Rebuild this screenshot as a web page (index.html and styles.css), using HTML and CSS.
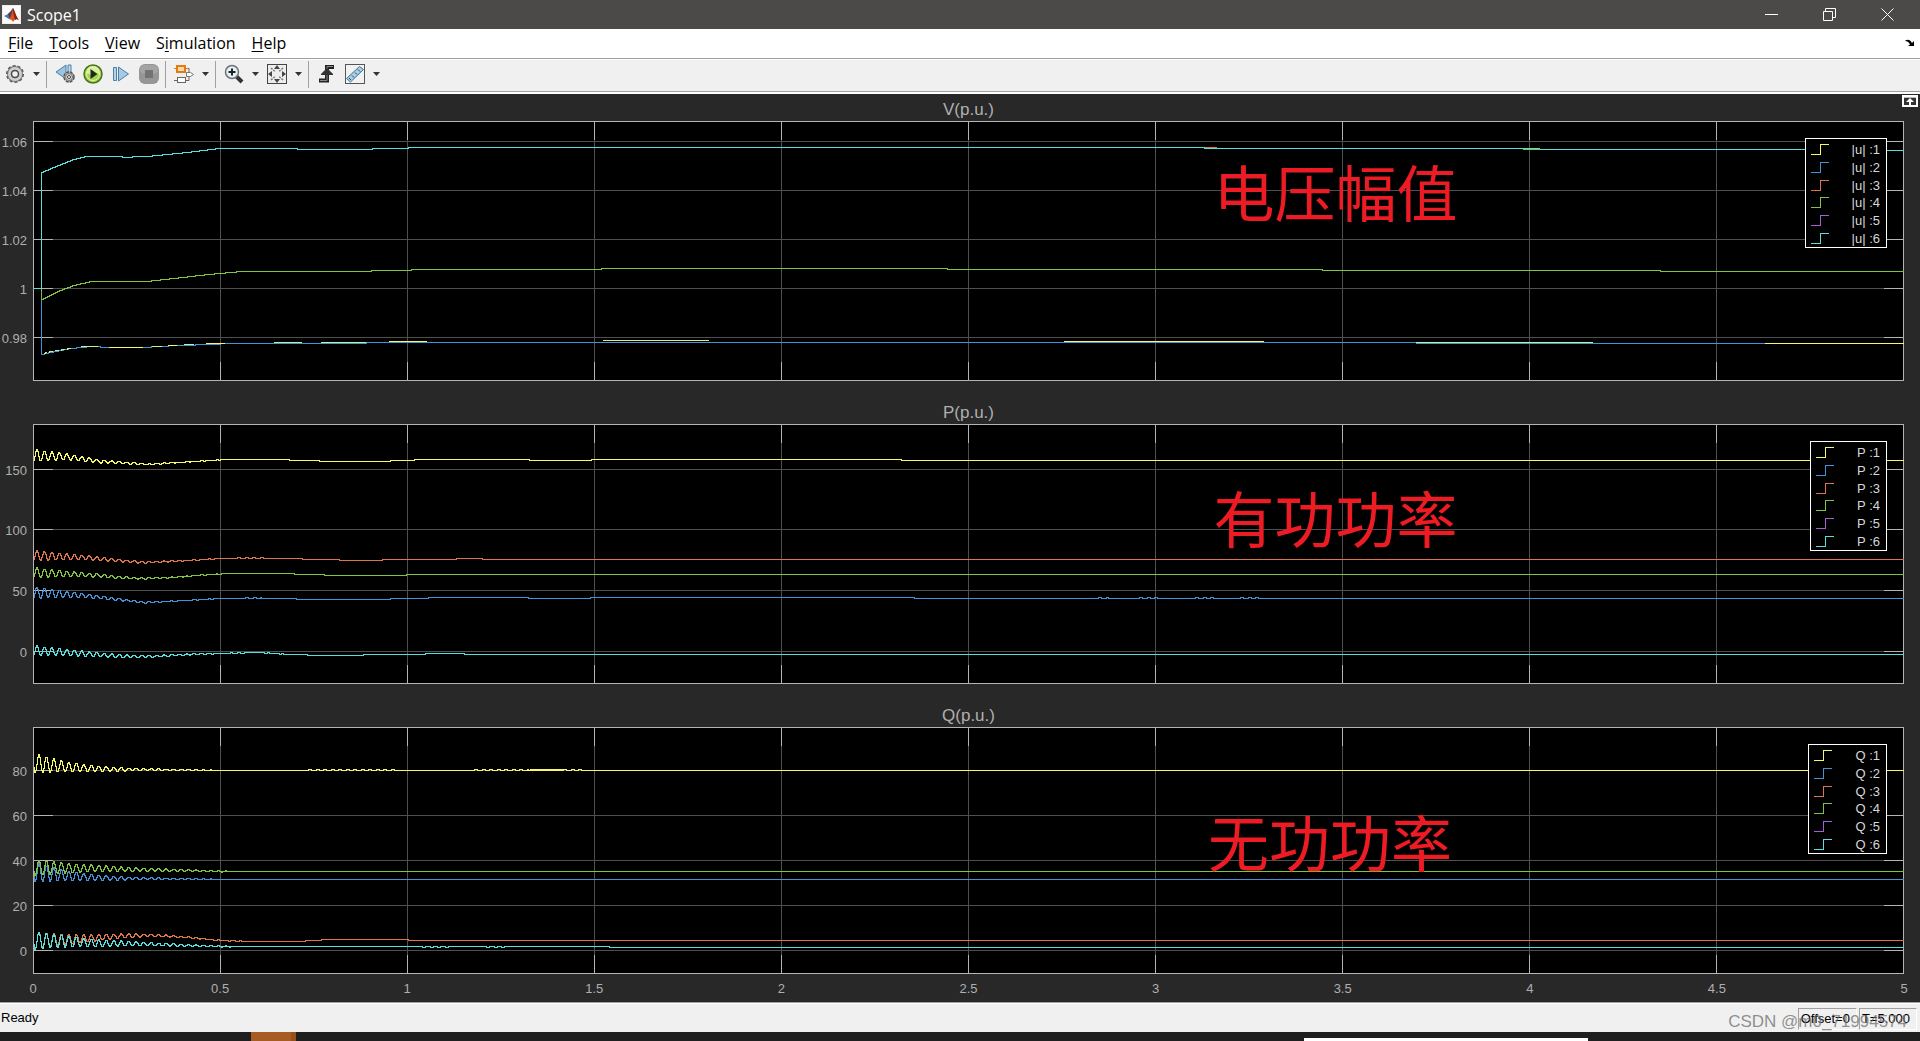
FILE: index.html
```html
<!DOCTYPE html>
<html lang="en">
  <head>
    <meta charset="utf-8">
    <title>Scope1</title>
    <link rel="stylesheet" href="styles.css">
  </head>
  <body>

    <header class="titlebar">
      <svg class="logo" width="19" height="19" viewBox="0 0 19 19">
        <rect width="19" height="19" fill="#e9eef2"/>
        <rect x="1" y="1" width="17" height="17" fill="#fafafa"/>
        <path d="M2 11l4-2 2-2 2 3-3 4z" fill="#3f7fb4"/>
        <path d="M6 9l2-2 3-4 1 5-4 7z" fill="#5b3a4c"/>
        <path d="M7 14c2-2 3-6 4-11 2 3 3 9 6 12-3-2-4-1-6 2-1-2-2-3-4-3z" fill="#d9541e"/>
        <path d="M11 3c2 3 3 9 6 12-2-1-3-1-4 0-1-3-2-7-2-12z" fill="#8c2413"/>
      </svg>
      <h1 class="apptitle">Scope1</h1>
      <button class="winbtn" aria-label="Minimize"><svg width="13" height="13" viewBox="0 0 13 13"><path d="M0 6.500H13"/></svg></button>
      <button class="winbtn" aria-label="Restore"><svg width="13" height="13" viewBox="0 0 13 13"><path d="M.5 3.500h9v9h-9zM2.500 3V.5h10v9H10"/></svg></button>
      <button class="winbtn" aria-label="Close"><svg width="13" height="13" viewBox="0 0 13 13"><path d="M.5 .5l12 12M12.500 .5l-12 12"/></svg></button>
    </header>

    <nav class="menubar">
      <button class="menu"><u>F</u>ile</button>
      <button class="menu"><u>T</u>ools</button>
      <button class="menu"><u>V</u>iew</button>
      <button class="menu">S<u>i</u>mulation</button>
      <button class="menu"><u>H</u>elp</button>
      <button class="dock" aria-label="Dock"><svg width="10" height="8" viewBox="0 0 10 8"><path d="M0 2C2 0 5 0 7 4L9 2V7H3L5 5.500C4 3 2 2 0 2z" fill="#000"/></svg></button>
    </nav>

    <div class="toolbar">
      <button class="tool" aria-label="Configuration"><svg width="20" height="20" viewBox="0 0 20 20">
        <circle cx="10" cy="10" r="8" fill="none" stroke="#555" stroke-width="2" stroke-dasharray="3 2"/>
        <circle cx="10" cy="10" r="5.500" fill="none" stroke="#777" stroke-width="5"/>
        <circle cx="10" cy="10" r="5.500" fill="none" stroke="#cfcfcf" stroke-width="3"/>
        <circle cx="10" cy="10" r="3.500" fill="#f0f0f0" stroke="#4a4a4a" stroke-width="1.500"/></svg></button>
      <button class="caret" aria-label="Configuration options"><svg width="7" height="4" viewBox="0 0 7 4"><path d="M0 0h7L3.500 4z"/></svg></button>
      <span class="sep"></span>
      <button class="tool" aria-label="Stepping options"><svg width="20" height="20" viewBox="0 0 20 20">
        <path d="M1 8l10-7v14z" fill="#9cc3e0" stroke="#4d81a8"/>
        <path d="M13 1h3v11h-3z" fill="#bdd9ec" stroke="#4d81a8"/>
        <circle cx="14" cy="13" r="5" fill="#bbb" stroke="#555" stroke-width="1.500" stroke-dasharray="3 1"/>
        <circle cx="14" cy="13" r="3.500" fill="#d5d5d5" stroke="#777"/>
        <circle cx="14" cy="13" r="1.500" fill="#fff" stroke="#444"/></svg></button>
      <button class="tool" aria-label="Run"><svg width="20" height="20" viewBox="0 0 20 20">
        <circle cx="10" cy="10" r="9" fill="#a5d34b" stroke="#47731b" stroke-width="1.500"/>
        <path d="M3 9a7 7 0 0 1 14 0c-4 2-9 2-14 0z" fill="#d8f09c"/>
        <circle cx="10" cy="10" r="6.500" fill="none" stroke="#e4f5bc"/>
        <path d="M7.500 5l7 5-7 5z" fill="#1d2b1b"/></svg></button>
      <button class="tool" aria-label="Step forward"><svg width="20" height="20" viewBox="0 0 20 20">
        <path d="M2.500 3.500h3v13h-3z" fill="#b5d3e8" stroke="#4d7fa6"/>
        <path d="M7.500 3l10 7-10 7z" fill="#a5cae3" stroke="#4d7fa6"/></svg></button>
      <button class="tool" aria-label="Stop"><svg width="20" height="20" viewBox="0 0 20 20">
        <rect width="20" height="20" rx="6" fill="#969696"/>
        <rect x="1" y="1" width="18" height="9" rx="5" fill="#a4a4a4"/>
        <rect x="6" y="6" width="8" height="8" fill="#737373"/></svg></button>
      <span class="sep"></span>
      <button class="tool" aria-label="Highlight block"><svg width="20" height="20" viewBox="0 0 20 20" fill="none">
        <path d="M0 4.500h3M11 4.500h4v4M0 16.500h3M11 16.500h4v-4" stroke="#666"/>
        <rect x="3" y="2" width="8" height="6" fill="#ffd9a5" stroke="#e07b16" stroke-width="2"/>
        <path d="M0 4.500h3M11 4.500h3" stroke="#e07b16"/>
        <rect x="3.500" y="13.500" width="8" height="5" fill="#fff" stroke="#666"/>
        <path d="M12.500 8.500h4l3 2-3 2h-4z" fill="#fff" stroke="#777"/></svg></button>
      <button class="caret" aria-label="Highlight options"><svg width="7" height="4" viewBox="0 0 7 4"><path d="M0 0h7L3.500 4z"/></svg></button>
      <span class="sep"></span>
      <button class="tool" aria-label="Zoom"><svg width="20" height="20" viewBox="0 0 20 20">
        <path d="M12 12l6 6" stroke="#333" stroke-width="4"/>
        <circle cx="8" cy="8" r="6.500" fill="#e4f0f6" stroke="#6d7478" stroke-width="1.500"/>
        <path d="M4.500 8h7M8 4.500v7" stroke="#222" stroke-width="2"/></svg></button>
      <button class="caret" aria-label="Zoom options"><svg width="7" height="4" viewBox="0 0 7 4"><path d="M0 0h7L3.500 4z"/></svg></button>
      <button class="tool" aria-label="Fit to view"><svg width="20" height="20" viewBox="0 0 20 20">
        <rect x=".5" y=".5" width="19" height="19" fill="#ededed" stroke="#444"/>
        <path d="M10 1l3 4H7zM10 19l3-4H7zM1 10l4-3v6zM19 10l-4-3v6z" fill="#444"/>
        <path d="M4 4l4 3.500M16 4l-4 3.500M4 16l4-3.500M16 16l-4-3.500" stroke="#777" stroke-width="1.500" stroke-dasharray="2 1"/></svg></button>
      <button class="caret" aria-label="Fit options"><svg width="7" height="4" viewBox="0 0 7 4"><path d="M0 0h7L3.500 4z"/></svg></button>
      <span class="sep"></span>
      <button class="tool" aria-label="Triggers"><svg width="20" height="20" viewBox="0 0 20 20">
        <path d="M2 16.500h8V3h7" fill="none" stroke="#222" stroke-width="4"/>
        <path d="M3 16.500h7V2.500h6" fill="none" stroke="#888"/>
        <path d="M4 10l6-6 6 6v1H4z" fill="#333"/></svg></button>
      <button class="tool" aria-label="Measurements"><svg width="20" height="20" viewBox="0 0 20 20">
        <rect x=".5" y=".5" width="19" height="19" fill="#f2f2f2" stroke="#555"/>
        <path d="M1.500 14.500l13-12 4 3-13 12.500z" fill="#a9cfe6" stroke="#45708c"/>
        <path d="M6 16l-2-2M9 13.500l-2-2M12 10.500l-2-2M15 7.500l-2-2" stroke="#234a66"/></svg></button>
      <button class="caret" aria-label="Measurement options"><svg width="7" height="4" viewBox="0 0 7 4"><path d="M0 0h7L3.500 4z"/></svg></button>
    </div>

    <main class="scope">
      <button class="maximize" aria-label="Maximize axes"><svg width="16" height="12" viewBox="0 0 16 12"><path d="M1 1h14v10H1z" fill="#333" stroke="#fff" stroke-width="2"/><path d="M2 2h12v1H2z" fill="#bbb"/><path d="M8 3l4 4H9v3H7V7H4z" fill="#fff"/></svg></button>

      <h2 class="title">V(p.u.)</h2>
      <section class="plot plot-v" id="v">
        <div class="note note-v" lang="zh">电压幅值</div>
      </section>

      <h2 class="title">P(p.u.)</h2>
      <section class="plot plot-p" id="p">
        <div class="note note-p" lang="zh">有功功率</div>
      </section>

      <h2 class="title">Q(p.u.)</h2>
      <section class="plot plot-q" id="q">
        <div class="note note-q" lang="zh">无功功率</div>
      </section>
    </main>

    <footer class="status">
      <span class="ready">Ready</span>
      <span class="field">Offset=0</span>
      <span class="field">T=5.000</span>
      <span class="watermark">CSDN @m0_71994574</span>
    </footer>

    <div class="taskbar">
      <span class="task"></span>
      <span class="preview"></span>
    </div>

    <script src="script.js"></script>
  </body>
</html>
```
FILE: styles.css
```css
* { box-sizing: border-box; }

body {
  margin: 0;
  height: 100vh;
  display: flex;
  flex-direction: column;
  overflow: hidden;
  background: #1f1f1f;
  font-family: "Liberation Sans", Arial, sans-serif;
  font-size: 13px;
}

button {
  margin: 0;
  padding: 0;
  border: 0;
  background: none;
  font: inherit;
  color: inherit;
}

svg { display: block; }

/* window frame */
.titlebar {
  flex: none;
  display: flex;
  align-items: center;
  height: 29px;
  padding: 0 4px 0 2px;
  background: #4b4a48;
  color: #fff;
}
.apptitle {
  flex: 1;
  margin: 0 0 0 6px;
  font: 16px/28px "Open Sans", "Noto Sans", sans-serif;
}
.winbtn {
  width: 58px;
  height: 29px;
  display: flex;
  align-items: center;
  justify-content: center;
}
.winbtn path { fill: none; stroke: #fff; }

.menubar {
  flex: none;
  display: flex;
  align-items: center;
  gap: 16px;
  height: 30px;
  padding: 0 5px 2px 8px;
  background: #fff;
  border-bottom: 1px solid #a0a0a0;
  color: #000;
  font: 16px/26px "Open Sans", "Noto Sans", sans-serif;
}
.menu u { text-underline-offset: 2px; }
.dock { margin-left: auto; }

.toolbar {
  flex: none;
  display: flex;
  align-items: center;
  height: 35px;
  padding: 0 0 3px 1px;
  background: #f0f0f0;
  border-bottom: 2px solid #fff;
  box-shadow: inset 0 1px #fff, inset 0 -1px #a0a0a0;
}
.tool {
  width: 28px;
  height: 28px;
  display: flex;
  align-items: center;
  justify-content: center;
}
.caret {
  width: 15px;
  height: 28px;
  display: flex;
  align-items: center;
  justify-content: center;
}
.caret path { fill: #333; }
.sep {
  width: 1px;
  height: 27px;
  margin: 0 4px 0 2px;
  background: #a0a0a0;
}

/* scope */
.scope {
  position: relative;
  flex: 1;
  min-height: 0;
  display: flex;
  flex-direction: column;
  padding: 0 16px 28px 33px;
  background: #282828;
  color: #afafaf;
}
.maximize {
  position: absolute;
  top: 1px;
  right: 2px;
}
.title {
  flex: none;
  margin: 0;
  padding-top: 4px;
  height: 27px;
  font-size: 17px;
  line-height: 23px;
  font-weight: normal;
  text-align: center;
}
.plot + .title { margin-top: 16px; }
.plot {
  position: relative;
  background: #000;
}
.plot-v { flex: 260 1 0; }
.plot-p { flex: 260 1 0; }
.plot-q { flex: 247 1 0; }

.graph {
  position: absolute;
  width: 100%;
  height: 100%;
  fill: none;
  shape-rendering: crispEdges;
}
.graph path { vector-effect: non-scaling-stroke; }
.grid { stroke: #4f4f4f; }
.ticks { stroke: #b4b4b4; }

.ylabel {
  position: absolute;
  right: 100%;
  margin: -6px 6px 0 0;
  line-height: 16px;
}
.xlabel {
  position: absolute;
  top: 100%;
  width: 40px;
  margin: 7px 0 0 -20px;
  line-height: 16px;
  text-align: center;
}

.note {
  position: absolute;
  z-index: 1;
  color: #ed1c24;
  font: 61px/60px "Noto Sans CJK SC", sans-serif;
  white-space: nowrap;
}
.note-v { left: 63.1%; top: 15.3%; }
.note-p { left: 63.1%; top: 24.2%; }
.note-q { left: 62.8%; top: 34%; }

.legend {
  position: absolute;
  z-index: 1;
  top: 17px;
  right: 17px;
  margin: 0;
  padding: 2px 6px 0 5px;
  height: 110px;
  display: flex;
  flex-direction: column;
  list-style: none;
  background: #000;
  border: 1px solid #fff;
  color: #d8d8d8;
}
.legend li {
  flex: 1;
  display: flex;
  align-items: center;
  justify-content: space-between;
  gap: 23px;
}
.legend svg {
  fill: none;
  shape-rendering: crispEdges;
}

.yellow { stroke: #f7f76a; }
.blue { stroke: #4593d6; }
.orange { stroke: #de7449; }
.green { stroke: #82c341; }
.purple { stroke: #a45fd6; }
.cyan { stroke: #55dfdf; }
.lime { stroke: #c4f294; }

/* bottom bars */
.status {
  position: relative;
  flex: none;
  display: flex;
  align-items: flex-end;
  gap: 2px;
  height: 30px;
  padding: 0 3px 2px 1px;
  background: #f0f0f0;
  border-top: 1px solid #a0a0a0;
  box-shadow: inset 0 1px #fff;
  color: #000;
}
.ready {
  flex: 1;
  line-height: 24px;
}
.field {
  padding: 0 6px 0 2px;
  line-height: 20px;
  border: 1px solid #fff;
  border-top-color: #a0a0a0;
  border-left-color: #a0a0a0;
}
.watermark {
  position: absolute;
  right: 13px;
  bottom: 0;
  font-size: 17px;
  line-height: 20px;
  color: rgba(110, 110, 110, 0.75);
}
.taskbar {
  flex: none;
  display: flex;
  justify-content: space-between;
  align-items: flex-end;
  height: 9px;
  padding: 0 332px 0 251px;
  background: #1f1f1f;
}
.task {
  width: 45px;
  height: 9px;
  background: #a65c22;
  border-right: 5px solid #985018;
}
.preview {
  width: 284px;
  height: 3px;
  background: #fff;
}
```
FILE: script.js
```js
const W = 1871;
const STEP = 187;
const COLORS = ['yellow', 'blue', 'orange', 'green', 'purple', 'cyan'];

// base: key points of the curve, wave: [amplitude, decay, first peak, bias]
// blips: [from, to, direction] short one-unit ripples
const plots = {
  v: {
    height: 260,
    name: '|u|',
    ticks: [[20, '1.06'], [69, '1.04'], [118, '1.02'], [167, '1'], [216, '0.98']],
    traces: [
      { color: 'blue', base: [[8, 178], [8, 233], [17, 231], [37, 227], [57, 225], [77, 226], [109, 226], [143, 224], [180, 223], [192, 222], [332, 222], [333, 221], [1382, 221], [1383, 222], [1870, 222]] },
      { color: 'lime', base: [[10, 232], [17, 230], [37, 227]], dash: '4 3' },
      { color: 'lime', base: [[47, 225], [64, 225]] },
      { color: 'yellow', base: [[75, 226], [109, 226]] },
      { color: 'lime', base: [[118, 225], [128, 225]] },
      { color: 'yellow', base: [[134, 224], [143, 224]] },
      { color: 'lime', base: [[150, 223], [160, 223]] },
      { color: 'yellow', base: [[172, 222], [191, 222]] },
      { color: 'lime', base: [[240, 221], [268, 221]] },
      { color: 'lime', base: [[287, 221], [332, 221]] },
      { color: 'yellow', base: [[355, 220], [393, 220]] },
      { color: 'lime', base: [[569, 219], [675, 219]] },
      { color: 'yellow', base: [[1030, 220], [1230, 220]] },
      { color: 'lime', base: [[1382, 221], [1559, 221]] },
      { color: 'yellow', base: [[1731, 222], [1870, 222]] },
      { color: 'green', base: [[8, 167], [8, 178], [27, 169], [40, 164], [58, 160], [113, 160], [140, 157], [175, 153], [208, 150], [337, 150], [338, 149], [377, 149], [378, 148], [567, 148], [568, 147], [913, 147], [914, 148], [1288, 148], [1289, 149], [1626, 149], [1627, 150], [1870, 150]] },
      { color: 'cyan', base: [[0, 167], [8, 167], [8, 51], [20, 46], [40, 38], [52, 35], [88, 35], [89, 36], [98, 36], [99, 35], [113, 35], [133, 33], [153, 31], [185, 27], [263, 27], [264, 28], [338, 28], [339, 27], [374, 27], [375, 26], [1170, 26], [1171, 27], [1505, 27], [1506, 28], [1810, 28], [1811, 29], [1870, 29]] },
      { color: 'orange', base: [[1171, 26], [1183, 26]] },
      { color: 'green', base: [[1489, 28], [1506, 28]] }
    ]
  },
  p: {
    height: 260,
    name: 'P',
    ticks: [[45, '150'], [105, '100'], [166, '50'], [227, '0']],
    traces: [
      { color: 'yellow', wave: [6, 52, 3, 0], base: [[0, 31], [30, 32], [67, 37], [100, 39], [114, 40], [144, 38], [177, 36], [192, 35], [255, 35], [256, 36], [285, 36], [286, 37], [356, 37], [357, 36], [380, 36], [381, 35], [495, 35], [496, 36], [557, 36], [558, 35], [867, 35], [868, 36], [1870, 36]] },
      { color: 'orange', wave: [5, 65, 3, 0], base: [[0, 131], [50, 133], [83, 136], [110, 138], [154, 136], [187, 134], [224, 134], [268, 134], [269, 135], [305, 135], [306, 136], [348, 136], [349, 135], [422, 135], [423, 134], [448, 134], [449, 135], [1870, 135]], blips: [[204, 230, -1]] },
      { color: 'green', wave: [5, 60, 3, 0], base: [[0, 148], [67, 151], [83, 153], [110, 154], [137, 153], [177, 150], [197, 149], [260, 149], [261, 150], [290, 150], [291, 151], [372, 151], [373, 150], [1870, 150]] },
      { color: 'blue', wave: [6, 52, 3, 0], base: [[0, 168], [50, 171], [94, 176], [110, 178], [134, 177], [187, 174], [262, 174], [263, 175], [356, 175], [357, 174], [394, 174], [395, 173], [494, 173], [495, 174], [556, 174], [557, 173], [880, 173], [881, 174], [1870, 174]], blips: [[212, 228, -1], [1065, 1075, -1], [1106, 1128, -1], [1162, 1180, -1], [1207, 1225, -1]] },
      { color: 'cyan', wave: [5, 75, 3, 0], base: [[0, 226], [34, 228], [73, 231], [97, 232], [117, 232], [154, 230], [187, 229], [224, 228], [257, 230], [290, 231], [329, 231], [330, 230], [391, 230], [392, 229], [430, 229], [431, 230], [1870, 230]] }
    ]
  },
  q: {
    height: 247,
    name: 'Q',
    ticks: [[43, '80'], [88, '60'], [133, '40'], [178, '20'], [223, '0']],
    traces: [
      { color: 'yellow', wave: [10, 50, 5, 1], base: [[0, 45], [67, 44], [120, 43], [1870, 43]], blips: [[275, 362, -1], [441, 495, -1], [530, 548, -1]] },
      { color: 'yellow', base: [[496, 42], [529, 42]] },
      { color: 'blue', wave: [10, 50, 5, 1], base: [[0, 154], [67, 153], [120, 152], [1870, 152]] },
      { color: 'green', wave: [8, 70, 5, 0], base: [[0, 140], [65, 141], [95, 142], [155, 143], [188, 144], [1870, 144]] },
      { color: 'orange', wave: [9, 60, 5, 0], base: [[0, 213], [35, 212], [65, 210], [95, 208], [125, 208], [155, 210], [187, 213], [217, 214], [255, 214], [287, 213], [288, 212], [374, 212], [375, 213], [1870, 213]] },
      { color: 'cyan', wave: [9, 70, 5, 0], base: [[0, 213], [35, 214], [65, 216], [95, 216], [125, 217], [155, 218], [187, 219], [217, 219], [250, 219], [575, 219], [576, 220], [1870, 220]], blips: [[389, 417, 1], [453, 474, 1]] }
    ]
  }
};

function tracePath(t) {
  const PERIOD = 7.48;
  let d = '';
  const add = (x, y) => {
    if (t.wave && x < 250) {
      const [amp, decay, peak, bias] = t.wave;
      y -= amp * Math.exp(-x / decay) * (bias + Math.cos((x - peak) * 2 * Math.PI / PERIOD));
    }
    for (const [from, to, dir] of t.blips || []) {
      if (x >= from && x < to && (x - from) % 7.5 < 3) y += dir;
    }
    const px = x + 0.5;
    const py = Math.round(y) + 0.5;
    d += d ? `H${px}V${py}` : `M${px} ${py}`;
  };
  add(...t.base[0]);
  for (let i = 1; i < t.base.length; i++) {
    const [x0, y0] = t.base[i - 1];
    const [x1, y1] = t.base[i];
    if (x1 === x0) add(x1, y1);
    for (let x = x0 + 1; x <= x1; x++) add(x, y0 + (y1 - y0) * (x - x0) / (x1 - x0));
  }
  return d;
}

function label(parent, cls, prop, value, text) {
  const el = document.createElement('span');
  el.className = cls;
  el.style[prop] = value + '%';
  el.textContent = text;
  parent.append(el);
}

for (const [id, plot] of Object.entries(plots)) {
  const section = document.getElementById(id);
  const h = plot.height;
  let grid = '';
  let ticks = `M.5 .5H${W - 0.5}V${h - 0.5}H.5Z`;
  for (let i = 1; i < 10; i++) {
    const x = i * STEP + 0.5;
    grid += `M${x} 0V${h}`;
    ticks += `M${x} 0V19M${x} ${h - 19}V${h}`;
  }
  for (const [y, text] of plot.ticks) {
    grid += `M0 ${y + 0.5}H${W}`;
    ticks += `M0 ${y + 0.5}H20M${W - 20} ${y + 0.5}H${W}`;
    label(section, 'ylabel', 'top', y / h * 100, text);
  }
  const traces = plot.traces.map(t =>
    `<path class="${t.color}" d="${tracePath(t)}"${t.dash ? ` stroke-dasharray="${t.dash}"` : ''}/>`).join('');
  section.insertAdjacentHTML('afterbegin',
    `<svg class="graph" viewBox="0 0 ${W} ${h}" preserveAspectRatio="none"><path class="grid" d="${grid}"/><path class="ticks" d="${ticks}"/>${traces}</svg>`);

  const items = COLORS.map((c, i) =>
    `<li><svg width="18" height="11" viewBox="0 0 18 11"><path class="${c}" d="M0 10.500H9.500V.5H18"/></svg>${plot.name} :${i + 1}</li>`).join('');
  section.insertAdjacentHTML('beforeend', `<ul class="legend">${items}</ul>`);
}

// time axis under the last plot
for (let i = 0; i <= 10; i++) {
  label(document.getElementById('q'), 'xlabel', 'left', i * 10, String(i / 2));
}
```
